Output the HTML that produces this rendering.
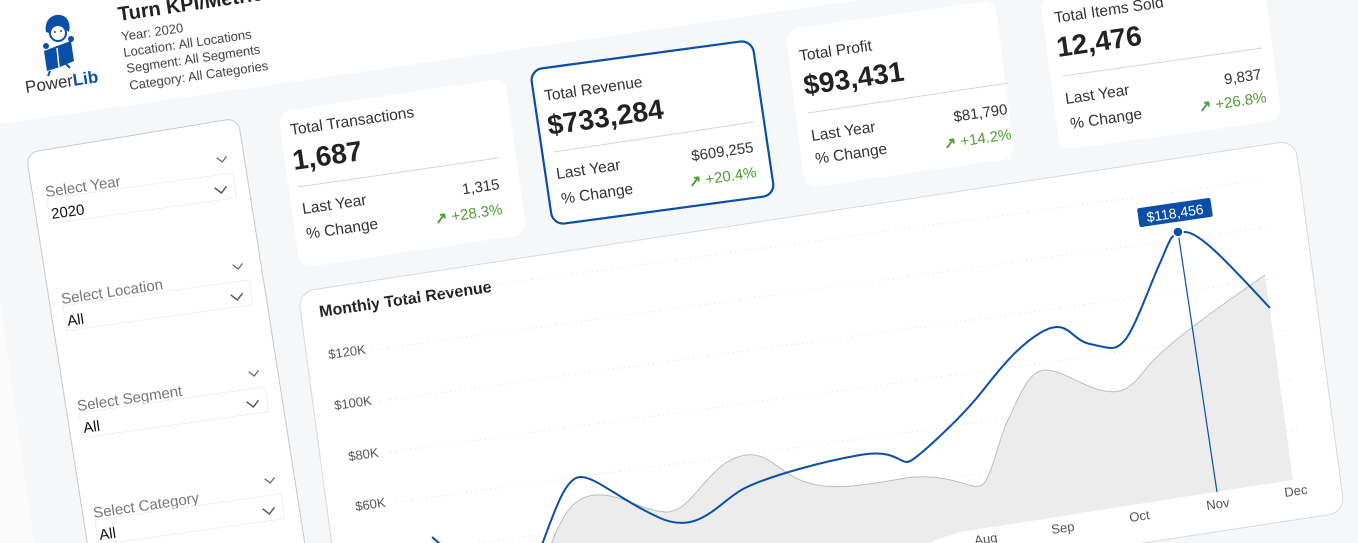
<!DOCTYPE html>
<html><head><meta charset="utf-8"><style>
html,body{margin:0;padding:0;width:1358px;height:543px;overflow:hidden;background:#fff}
svg{display:block}
text{font-family:"Liberation Sans",sans-serif}
</style></head><body>
<svg width="1358" height="543" viewBox="0 0 1358 543" xmlns="http://www.w3.org/2000/svg" style="position:absolute;left:0;top:0">
<rect width="1358" height="543" fill="#f5f7f9"/>
<polygon points="0,0 1358,0 1358,-72 0,124" fill="#ffffff"/>
<polygon points="0,300 34,543 0,543" fill="#fbfbfc"/>

<!-- logo -->
<g fill="#0a4ea8">
  <path d="M46,32 C44,20 52,14 60,15 C68,16 71,24 69,32 L65,29 C60,26 52,27 49,33 Z"/>
  <circle cx="58" cy="33" r="8" fill="#fff" stroke="#0a4ea8" stroke-width="2"/>
  <circle cx="55" cy="32" r="1" /><circle cx="61" cy="31" r="1"/>
  <path d="M44,51 L57,46 L71,41 L74,61 L60,67 L47,71 Z"/>
  <path d="M57,48 L59,67" stroke="#fff" stroke-width="1.5"/>
  <circle cx="46" cy="46" r="3"/><circle cx="71" cy="39" r="3"/>
  <path d="M50,71 L48,76 M66,64 L70,68" stroke="#0a4ea8" stroke-width="2"/>
</g>
<g transform="translate(26,93) rotate(-8.5)"><text font-size="17" fill="#333">Power<tspan fill="#0a4ea8" font-weight="bold">Lib</tspan></text></g>

<!-- header text -->
<g fill="#222">
<g transform="translate(119,21) rotate(-8.3)"><text font-size="20" font-weight="bold">Turn KPI/Metrics</text></g>
<g transform="translate(122,41) rotate(-8.3)"><text font-size="13" fill="#444">Year: 2020</text></g>
<g transform="translate(124,57) rotate(-8.3)"><text font-size="13" fill="#444">Location: All Locations</text></g>
<g transform="translate(127,73) rotate(-8.3)"><text font-size="13" fill="#444">Segment: All Segments</text></g>
<g transform="translate(130,90) rotate(-8.3)"><text font-size="13" fill="#444">Category: All Categories</text></g>
</g>

<!-- filter panel -->
<rect width="215" height="470" rx="12" fill="#fff" stroke="#c8c8c8" stroke-width="1" transform="matrix(0.986,-0.163,0.156,0.993,26,153)"/>
<g>
  <path d="M-5,-3 L0,2 L5,-3" fill="none" stroke="#666" stroke-width="1.2" transform="translate(222,160) rotate(-8)"/>
  <g transform="translate(46,197) rotate(-8.3)"><text font-size="15" fill="#777">Select Year</text></g>
  <rect width="188" height="25" fill="#fff" stroke="#efefef" transform="matrix(0.99,-0.139,0.14,0.99,47,199)"/>
  <path d="M-6,-3 L0,3 L6,-3" fill="none" stroke="#555" stroke-width="1.4" transform="translate(221,190) rotate(-8)"/>
  <g transform="translate(52,219) rotate(-8.3)"><text font-size="15" fill="#111">2020</text></g>
</g>
<g transform="translate(16,107)">
  <path d="M-5,-3 L0,2 L5,-3" fill="none" stroke="#666" stroke-width="1.2" transform="translate(222,160) rotate(-8)"/>
  <g transform="translate(46,197) rotate(-8.3)"><text font-size="15" fill="#777">Select Location</text></g>
  <rect width="188" height="25" fill="#fff" stroke="#efefef" transform="matrix(0.99,-0.139,0.14,0.99,47,199)"/>
  <path d="M-6,-3 L0,3 L6,-3" fill="none" stroke="#555" stroke-width="1.4" transform="translate(221,190) rotate(-8)"/>
  <g transform="translate(52,219) rotate(-8.3)"><text font-size="15" fill="#111">All</text></g>
</g>
<g transform="translate(32,214)">
  <path d="M-5,-3 L0,2 L5,-3" fill="none" stroke="#666" stroke-width="1.2" transform="translate(222,160) rotate(-8)"/>
  <g transform="translate(46,197) rotate(-8.3)"><text font-size="15" fill="#777">Select Segment</text></g>
  <rect width="188" height="25" fill="#fff" stroke="#efefef" transform="matrix(0.99,-0.139,0.14,0.99,47,199)"/>
  <path d="M-6,-3 L0,3 L6,-3" fill="none" stroke="#555" stroke-width="1.4" transform="translate(221,190) rotate(-8)"/>
  <g transform="translate(52,219) rotate(-8.3)"><text font-size="15" fill="#111">All</text></g>
</g>
<g transform="translate(48,321)">
  <path d="M-5,-3 L0,2 L5,-3" fill="none" stroke="#666" stroke-width="1.2" transform="translate(222,160) rotate(-8)"/>
  <g transform="translate(46,197) rotate(-8.3)"><text font-size="15" fill="#777">Select Category</text></g>
  <rect width="188" height="25" fill="#fff" stroke="#efefef" transform="matrix(0.99,-0.139,0.14,0.99,47,199)"/>
  <path d="M-6,-3 L0,3 L6,-3" fill="none" stroke="#555" stroke-width="1.4" transform="translate(221,190) rotate(-8)"/>
  <g transform="translate(52,219) rotate(-8.3)"><text font-size="15" fill="#111">All</text></g>
</g>

<!-- KPI cards -->
<rect width="230" height="157" rx="12" fill="#fff" transform="matrix(0.987,-0.148,0.14,0.994,278,112)"/>
<rect width="224" height="156" rx="12" fill="#fff" stroke="#0a4ea8" stroke-width="2.2" transform="matrix(0.991,-0.134,0.147,0.994,530,70)"/>
<rect width="212" height="159" rx="12" fill="#fff" transform="matrix(0.99,-0.141,0.126,0.994,785,30)"/>
<rect width="224" height="154" rx="12" fill="#fff" transform="matrix(0.991,-0.134,0.13,0.994,1040,-3)"/>

<g stroke="#d5d5d5" stroke-width="1">
<line x1="298" y1="187" x2="498" y2="158"/>
<line x1="554" y1="152" x2="754" y2="122"/>
<line x1="808" y1="113" x2="1008" y2="83"/>
<line x1="1063" y1="76" x2="1262" y2="48"/>
</g>

<g fill="#333">
<g transform="translate(291,135) rotate(-8.3)"><text font-size="15.5">Total Transactions</text></g>
<g transform="translate(294,170) rotate(-8.3)"><text font-size="28" font-weight="bold" fill="#222">1,687</text></g>
<g transform="translate(303,214) rotate(-8.3)"><text font-size="15.5">Last Year</text></g>
<g transform="translate(500,189) rotate(-8.3)"><text font-size="15" text-anchor="end">1,315</text></g>
<g transform="translate(307,239) rotate(-8.3)"><text font-size="15.5">% Change</text></g>
<g transform="translate(503,214) rotate(-8.3)"><text font-size="15" text-anchor="end" fill="#4f9a35"><tspan font-weight="bold">↗</tspan> +28.3%</text></g>

<g transform="translate(545,101) rotate(-8.3)"><text font-size="15.5">Total Revenue</text></g>
<g transform="translate(549,135) rotate(-8.3)"><text font-size="28" font-weight="bold" fill="#222">$733,284</text></g>
<g transform="translate(557,179) rotate(-8.3)"><text font-size="15.5">Last Year</text></g>
<g transform="translate(754,152) rotate(-8.3)"><text font-size="15" text-anchor="end">$609,255</text></g>
<g transform="translate(562,204) rotate(-8.3)"><text font-size="15.5">% Change</text></g>
<g transform="translate(757,177) rotate(-8.3)"><text font-size="15" text-anchor="end" fill="#4f9a35"><tspan font-weight="bold">↗</tspan> +20.4%</text></g>

<g transform="translate(800,61) rotate(-8.3)"><text font-size="15.5">Total Profit</text></g>
<g transform="translate(805,95) rotate(-8.3)"><text font-size="28" font-weight="bold" fill="#222">$93,431</text></g>
<g transform="translate(812,141) rotate(-8.3)"><text font-size="15.5">Last Year</text></g>
<g transform="translate(1008,114) rotate(-8.3)"><text font-size="15" text-anchor="end">$81,790</text></g>
<g transform="translate(816,164) rotate(-8.3)"><text font-size="15.5">% Change</text></g>
<g transform="translate(1012,139) rotate(-8.3)"><text font-size="15" text-anchor="end" fill="#4f9a35"><tspan font-weight="bold">↗</tspan> +14.2%</text></g>

<g transform="translate(1055,23) rotate(-8.3)"><text font-size="15.5">Total Items Sold</text></g>
<g transform="translate(1058,57) rotate(-8.3)"><text font-size="28" font-weight="bold" fill="#222">12,476</text></g>
<g transform="translate(1066,104) rotate(-8.3)"><text font-size="15.5">Last Year</text></g>
<g transform="translate(1262,79) rotate(-8.3)"><text font-size="15" text-anchor="end">9,837</text></g>
<g transform="translate(1071,129) rotate(-8.3)"><text font-size="15.5">% Change</text></g>
<g transform="translate(1267,102) rotate(-8.3)"><text font-size="15" text-anchor="end" fill="#4f9a35"><tspan font-weight="bold">↗</tspan> +26.8%</text></g>
</g>

<!-- chart card -->
<rect width="1005" height="375" rx="16" fill="#fff" stroke="#d8d8d8" stroke-width="1" transform="matrix(0.992,-0.151,0.133,0.992,298,292)"/>
<g transform="translate(320,317) rotate(-8.3)"><text font-size="16" font-weight="bold" fill="#222">Monthly Total Revenue</text></g>

<g stroke="#ebebeb" stroke-width="1" stroke-dasharray="2 3">
<line x1="368" y1="302" x2="1262" y2="180"/>
<line x1="372" y1="350" x2="1270" y2="227"/>
<line x1="380" y1="401" x2="1278" y2="278"/>
<line x1="390" y1="452" x2="1285" y2="330"/>
<line x1="396" y1="502" x2="1292" y2="380"/>
<line x1="404" y1="553" x2="1298" y2="430"/>
</g>
<g>
<g transform="translate(329,359) rotate(-8.3)"><text font-size="13" fill="#555">$120K</text></g>
<g transform="translate(335,410) rotate(-8.3)"><text font-size="13" fill="#555">$100K</text></g>
<g transform="translate(349,461) rotate(-8.3)"><text font-size="13" fill="#555">$80K</text></g>
<g transform="translate(356,511) rotate(-8.3)"><text font-size="13" fill="#555">$60K</text></g>
<g transform="translate(975,545) rotate(-8.3)"><text font-size="13" fill="#555">Aug</text></g>
<g transform="translate(1052,534) rotate(-8.3)"><text font-size="13" fill="#555">Sep</text></g>
<g transform="translate(1130,522) rotate(-8.3)"><text font-size="13" fill="#555">Oct</text></g>
<g transform="translate(1207,510) rotate(-8.3)"><text font-size="13" fill="#555">Nov</text></g>
<g transform="translate(1285,497) rotate(-8.3)"><text font-size="13" fill="#555">Dec</text></g>
</g>

<!-- gray area -->
<path d="M545,560 C560,520 570,497 595,495 S640,510 665,512 S705,470 735,458 S775,470 800,480 S850,488 900,479 S972,492 982,485 S998,440 1008,420 S1028,370 1045,370 S1080,385 1100,390 S1130,390 1145,370 S1200,320 1265,275 L1293,480 L960,532 L880,560 Z" fill="#ececec"/>
<path d="M545,560 C560,520 570,497 595,495 S640,510 665,512 S705,470 735,458 S775,470 800,480 S850,488 900,479 S972,492 982,485 S998,440 1008,420 S1028,370 1045,370 S1080,385 1100,390 S1130,390 1145,370 S1200,320 1265,275" fill="none" stroke="#bdbdbd" stroke-width="1"/>

<!-- blue line -->
<path d="M432,537 L447,550" stroke="#0a4ea8" stroke-width="2" fill="none"/>
<path d="M540,550 C555,510 565,478 580,477 S620,500 660,518 S720,500 745,488 S820,462 860,455 S900,468 912,460 S958,420 975,400 S1012,350 1040,333 S1070,340 1090,344 S1115,352 1125,340 S1150,285 1160,263 S1170,232 1185,232 S1230,265 1270,308" stroke="#0a4ea8" stroke-width="2" fill="none"/>
<line x1="1178" y1="232" x2="1217" y2="492" stroke="#0a4ea8" stroke-width="1.2"/>
<circle cx="1178" cy="232" r="5" fill="#0a4ea8" stroke="#fff" stroke-width="1.5"/>
<g transform="translate(1175,213) rotate(-8.3)">
  <rect x="-37" y="-10" width="74" height="19" rx="2" fill="#0a4ea8"/>
  <text x="0" y="5" font-size="14" fill="#fff" text-anchor="middle">$118,456</text>
</g>
</svg>
</body></html>
